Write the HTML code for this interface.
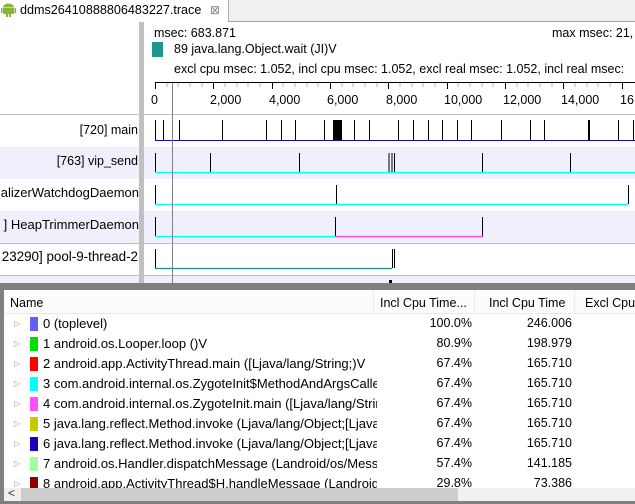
<!DOCTYPE html>
<html><head><meta charset="utf-8"><style>
*{margin:0;padding:0;box-sizing:border-box}
body{width:635px;height:504px;overflow:hidden;background:#fff;font-family:"Liberation Sans",sans-serif;font-size:12px;color:#000;position:relative}
.a{position:absolute;white-space:nowrap}
.row{position:absolute;left:0;width:635px;height:32px}
.lbl{position:absolute;right:497px;font-size:12.5px;white-space:nowrap}
.tr{position:absolute;left:4px;width:631px;height:20px;white-space:nowrap}
.tr .t{position:absolute;left:10px;top:5px;font-size:8px;color:#999}
.tr .sq{position:absolute;left:26px;top:3px;width:8px;height:14px}
.tr .n{position:absolute;left:39px;top:2px;font-size:13px;width:334px;overflow:hidden;white-space:nowrap}
.tr .p{position:absolute;right:163px;top:2px;font-size:12.5px}
.tr .v{position:absolute;right:63px;top:2px;font-size:12.5px}
</style></head><body>
<div class="a" style="left:0;top:0;width:635px;height:22px;background:#f0f0f0;border-bottom:1px solid #a0a0a0"></div>
<div class="a" style="left:0;top:0;width:229px;height:22px;background:#fff;border-right:1px solid #b0b0b0"></div>
<svg class="a" style="left:1px;top:2px" width="15" height="16" viewBox="0 0 15 16"><path d="M2 6h11v6H2z M5 12h2v3H5z M8 12h2v3H8z M0 6h1.5v5H0z M13.5 6H15v5h-1.5z M2 5.5a5.5 4 0 0 1 11 0z" fill="#8cb43c"/></svg>
<div class="a" style="left:20px;top:3px;font-size:12.6px">ddms26410888806483227.trace</div>
<div class="a" style="left:210px;top:3px;font-size:12px;color:#888">⊠</div>
<div class="a" style="left:139px;top:22px;width:5px;height:261px;background:#c0c0c0"></div>
<div class="a" style="left:154px;top:26px;font-size:12.5px">msec: 683.871</div>
<div class="a" style="left:552px;top:26px;font-size:12.5px">max msec: 21,</div>
<div class="a" style="left:152px;top:42px;width:11px;height:15px;background:#1f9690"></div>
<div class="a" style="left:174px;top:42px;font-size:12.5px">89 java.lang.Object.wait (JI)V</div>
<div class="a" style="left:174px;top:62px;font-size:12.5px">excl cpu msec: 1.052, incl cpu msec: 1.052, excl real msec: 1.052, incl real msec:</div>
<svg class="a" style="left:0;top:80px" width="635" height="10">
<line x1="155" y1="2.5" x2="635" y2="2.5" stroke="#000"/>
<g stroke="#000"><path d="M155.5 2v7M213.5 2v7M272.5 2v7M330.5 2v7M388.5 2v7M447.5 2v7M505.5 2v7M563.5 2v7M622.5 2v7"/></g>
<g stroke="#bbb"><path d="M167 3v4M178 3v4M190 3v4M202 3v4M225 3v4M237 3v4M248 3v4M260 3v4M283 3v4M295 3v4M307 3v4M318 3v4M342 3v4M353 3v4M365 3v4M377 3v4M400 3v4M412 3v4M423 3v4M435 3v4M458 3v4M470 3v4M482 3v4M493 3v4M517 3v4M528 3v4M540 3v4M552 3v4M575 3v4M587 3v4M598 3v4M610 3v4"/></g></svg>
<div class="a" style="left:151px;top:93px;font-size:12.5px">0</div>
<div class="a" style="left:210px;top:93px;font-size:12.5px">2,000</div>
<div class="a" style="left:269px;top:93px;font-size:12.5px">4,000</div>
<div class="a" style="left:327px;top:93px;font-size:12.5px">6,000</div>
<div class="a" style="left:386px;top:93px;font-size:12.5px">8,000</div>
<div class="a" style="left:444px;top:93px;font-size:12.5px">10,000</div>
<div class="a" style="left:503px;top:93px;font-size:12.5px">12,000</div>
<div class="a" style="left:561px;top:93px;font-size:12.5px">14,000</div>
<div class="a" style="left:620px;top:93px;font-size:12.5px">16,</div>
<div class="a" style="left:0;top:114px;width:635px;height:1px;background:#c0c0c0"></div>
<div class="row" style="top:115px"><span class="lbl" style="top:8px">[720] main</span></div>
<div class="row" style="top:147px;background:#f0f0fc"><span class="lbl" style="top:7px">[763] vip_send</span></div>
<div class="row" style="top:179px"><span class="lbl" style="top:6px;right:496px;font-size:13px">alizerWatchdogDaemon</span></div>
<div class="row" style="top:211px;background:#f0f0fc"><span class="lbl" style="top:6px;right:496px;font-size:13px">] HeapTrimmerDaemon</span></div>
<div class="a" style="left:0;top:243px;width:635px;height:1px;background:#c0c0c0"></div>
<div class="row" style="top:244px"><span class="lbl" style="top:5px;font-size:13.4px">23290] pool-9-thread-2</span></div>
<div class="a" style="left:0;top:275px;width:635px;height:1px;background:#c0c0c0"></div>
<div class="a" style="left:0;top:276px;width:635px;height:7px;background:#f0f0fc"></div>
<div class="a" style="left:139px;top:114px;width:5px;height:169px;background:#c0c0c0"></div>
<svg class="a" style="left:0;top:110px" width="635" height="173">
<g stroke="#000" stroke-width="1">
<path d="M155.5 10v20M163.5 10v20M179.5 10v20M222.5 10v20M266.5 10v20M281.5 10v20M295.5 10v20M324.5 10v20M354.5 10v20M369.5 10v20M398.5 10v20M413.5 10v20M428.5 10v20M442.5 10v20M457.5 10v20M471.5 10v20M501.5 10v20M530.5 10v20M544.5 10v20M618.5 10v20M633.5 10v20"/>
<path d="M155.5 43v19M210.5 43v19M299.5 43v19M482.5 43v19M570.5 43v19M389 43v19M392 43v19M394.5 43v19"/>
<path d="M155.5 75v19M336.5 75v19M628.5 75v19"/>
<path d="M155.5 107v19M335.5 107v19M482.5 107v19"/>
<path d="M155.5 139v19M392.5 139v19M394.5 139v19"/>
</g>
<rect x="333" y="10" width="9" height="20" fill="#000"/>
<rect x="588" y="10" width="2" height="20" fill="#000"/>
<rect x="389" y="170" width="3" height="3" fill="#000"/>
<line x1="155" y1="30.5" x2="635" y2="30.5" stroke="#2000c0"/>
<line x1="155" y1="62.5" x2="635" y2="62.5" stroke="#00ffff" stroke-width="1.2"/>
<line x1="155" y1="94.5" x2="628" y2="94.5" stroke="#00ffff" stroke-width="1.2"/>
<line x1="155" y1="126.5" x2="335" y2="126.5" stroke="#00ffff" stroke-width="1.2"/>
<line x1="335" y1="126.5" x2="483" y2="126.5" stroke="#ff40ff" stroke-width="1.2"/>
<line x1="155" y1="158.5" x2="392" y2="158.5" stroke="#1a9090" stroke-width="1.2"/>
</svg>
<div class="a" style="left:172px;top:83px;width:1px;height:200px;background:#808080"></div>
<div class="a" style="left:0;top:283px;width:635px;height:7px;background:#808080"></div>
<div class="a" style="left:0;top:290px;width:4px;height:214px;background:#808080"></div>
<div class="a" style="left:4px;top:290px;width:631px;height:24px;background:#fcfcfc;border-bottom:1px solid #e0eaf6"></div>
<div class="a" style="left:10px;top:296px;font-size:12.5px">Name</div>
<div class="a" style="left:373px;top:290px;width:1px;height:23px;background:#e4ecf6"></div>
<div class="a" style="left:474px;top:290px;width:1px;height:23px;background:#e4ecf6"></div>
<div class="a" style="left:574px;top:290px;width:1px;height:23px;background:#e4ecf6"></div>
<div class="a" style="left:380px;top:296px;font-size:12.5px">Incl Cpu Time...</div>
<div class="a" style="left:489px;top:296px;font-size:12.5px">Incl Cpu Time</div>
<div class="a" style="left:585px;top:296px;font-size:12.5px">Excl Cpu</div>
<div class="tr" style="top:314px"><span class="t">▷</span><span class="sq" style="background:#6060ff"></span><span class="n">0 (toplevel)</span><span class="p">100.0%</span><span class="v">246.006</span></div>
<div class="tr" style="top:334px"><span class="t">▷</span><span class="sq" style="background:#00e000"></span><span class="n">1 android.os.Looper.loop ()V</span><span class="p">80.9%</span><span class="v">198.979</span></div>
<div class="tr" style="top:354px"><span class="t">▷</span><span class="sq" style="background:#ff0000"></span><span class="n">2 android.app.ActivityThread.main ([Ljava/lang/String;)V</span><span class="p">67.4%</span><span class="v">165.710</span></div>
<div class="tr" style="top:374px"><span class="t">▷</span><span class="sq" style="background:#00ffff"></span><span class="n">3 com.android.internal.os.ZygoteInit$MethodAndArgsCaller</span><span class="p">67.4%</span><span class="v">165.710</span></div>
<div class="tr" style="top:394px"><span class="t">▷</span><span class="sq" style="background:#ff50ff"></span><span class="n">4 com.android.internal.os.ZygoteInit.main ([Ljava/lang/String</span><span class="p">67.4%</span><span class="v">165.710</span></div>
<div class="tr" style="top:414px"><span class="t">▷</span><span class="sq" style="background:#c8c800"></span><span class="n">5 java.lang.reflect.Method.invoke (Ljava/lang/Object;[Ljava</span><span class="p">67.4%</span><span class="v">165.710</span></div>
<div class="tr" style="top:434px"><span class="t">▷</span><span class="sq" style="background:#2000c0"></span><span class="n">6 java.lang.reflect.Method.invoke (Ljava/lang/Object;[Ljava</span><span class="p">67.4%</span><span class="v">165.710</span></div>
<div class="tr" style="top:454px"><span class="t">▷</span><span class="sq" style="background:#a0ffa0"></span><span class="n">7 android.os.Handler.dispatchMessage (Landroid/os/Message</span><span class="p">57.4%</span><span class="v">141.185</span></div>
<div class="tr" style="top:474px;height:14px;overflow:hidden"><span class="t">▷</span><span class="sq" style="background:#900000"></span><span class="n">8 android.app.ActivityThread$H.handleMessage (Landroid</span><span class="p">29.8%</span><span class="v">73.386</span></div>
<div class="a" style="left:4px;top:488px;width:631px;height:13px;background:#f0f0f0"></div>
<div class="a" style="left:21px;top:488px;width:437px;height:13px;background:#cdcdcd"></div>
<div class="a" style="left:8px;top:486px;font-size:12px;color:#333">&lt;</div>
<div class="a" style="left:0;top:501px;width:635px;height:3px;background:#808080"></div>
</body></html>
